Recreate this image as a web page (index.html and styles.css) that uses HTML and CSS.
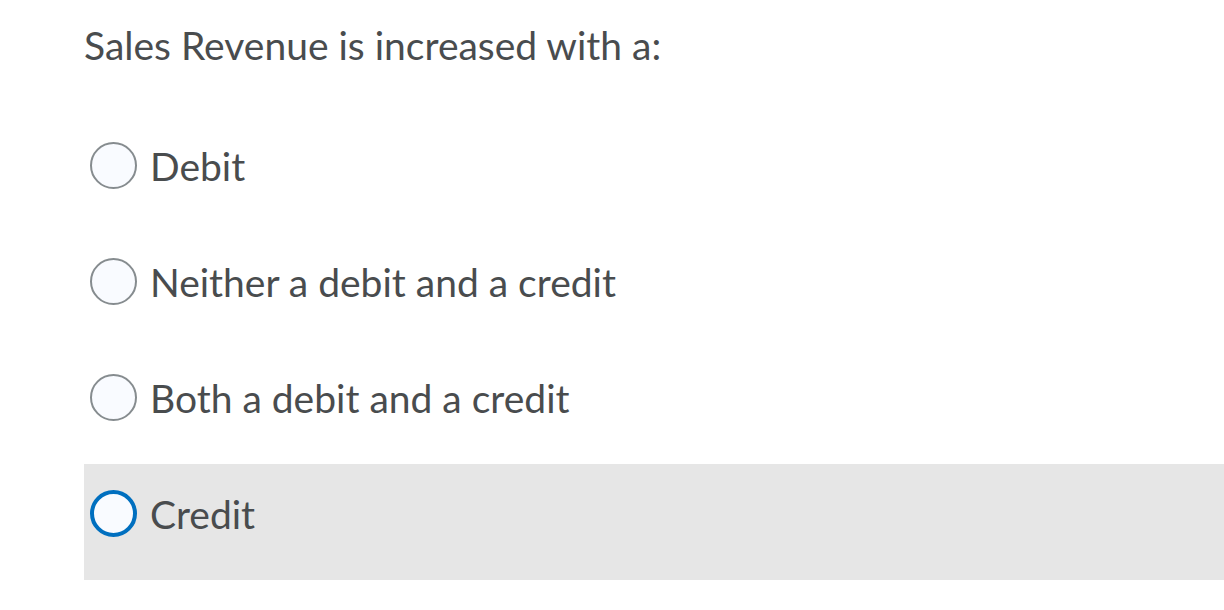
FILE: index.html
```html
<!DOCTYPE html>
<html>
<head>
<meta charset="utf-8">
<link rel="stylesheet" href="styles.css">
</head>
<body>
<div class="question">
  <div class="title">Sales Revenue is increased with a:</div>
  <div class="options">
    <label class="option"><span class="radio"></span><span class="label">Debit</span></label>
    <label class="option"><span class="radio"></span><span class="label">Neither a debit and a credit</span></label>
    <label class="option"><span class="radio"></span><span class="label">Both a debit and a credit</span></label>
    <label class="option hover"><span class="radio focus"></span><span class="label">Credit</span></label>
  </div>
</div>
</body>
</html>
```
FILE: styles.css
```css
html, body {
  margin: 0;
  padding: 0;
  background: #ffffff;
}
body {
  font-family: Lato, "Liberation Sans", sans-serif;
  color: #494c4e;
  width: 1224px;
  height: 610px;
  overflow: hidden;
}
.question {
  padding-left: 84px;
}
.title {
  height: 116px;
  box-sizing: border-box;
  padding-top: 22px;
  font-size: 39px;
  line-height: 46px;
}
.options {
  display: flex;
  flex-direction: column;
}
.option {
  display: flex;
  align-items: center;
  height: 116px;
  box-sizing: border-box;
  padding: 0 0 17px 6px;
  gap: 13px;
}
.option.hover {
  background: #e6e6e6;
}
.radio {
  width: 47px;
  height: 47px;
  box-sizing: border-box;
  border-radius: 50%;
  border: 2px solid #868c8f;
  background: #f9fbff;
  flex: none;
}
.radio.focus {
  border: 4px solid #006fbf;
}
.label {
  font-size: 39px;
  line-height: 46px;
}
```
